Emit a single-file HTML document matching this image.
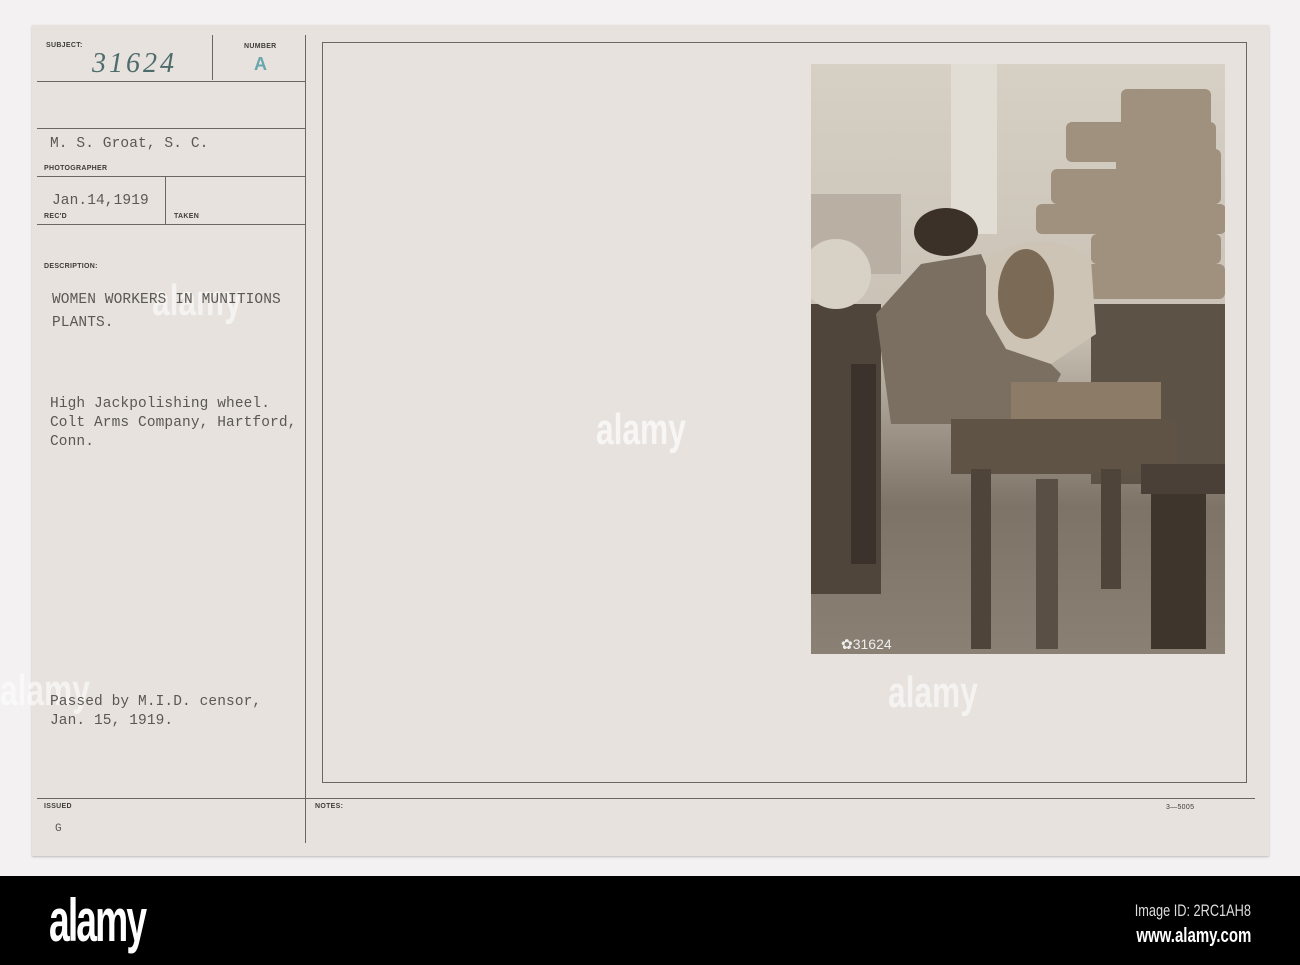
<!DOCTYPE html>
<html><head><meta charset="utf-8"><style>
*{margin:0;padding:0;box-sizing:border-box}
body{width:1300px;height:965px;background:#f3f1f1;position:relative;overflow:hidden;font-family:"Liberation Mono",monospace}
.card{position:absolute;left:32px;top:25px;width:1237px;height:831px;background:#e7e2dd;box-shadow:0 1px 2px #bbb}
.l{position:absolute;background:#6b6660}
.t{position:absolute;color:#5b5752;font-size:14.5px;line-height:19px;white-space:pre;letter-spacing:.1px}
.s{position:absolute;color:#3f3c39;font-family:"Liberation Sans",sans-serif;font-size:7px;font-weight:bold;letter-spacing:.3px}
.wm{position:absolute;color:rgba(255,255,255,.6);font-family:"Liberation Sans",sans-serif;font-weight:bold;font-size:44px;transform:scaleX(.72);transform-origin:left}
.bar{position:absolute;left:0;top:876px;width:1300px;height:89px;background:#000}
</style></head><body>
<div class="card"></div>
<div class="l" style="left:37px;top:81px;width:268px;height:1px"></div>
<div class="l" style="left:212px;top:35px;width:1px;height:45px"></div>
<div class="l" style="left:37px;top:128px;width:268px;height:1px"></div>
<div class="l" style="left:37px;top:176px;width:268px;height:1px"></div>
<div class="l" style="left:165px;top:177px;width:1px;height:47px"></div>
<div class="l" style="left:37px;top:224px;width:268px;height:1px"></div>
<div class="l" style="left:305px;top:35px;width:1px;height:808px"></div>
<div class="l" style="left:37px;top:798px;width:1218px;height:1px"></div>
<div style="position:absolute;left:322px;top:42px;width:925px;height:741px;border:1px solid #6b6660"></div>
<div class="s" style="left:46px;top:42px">SUBJECT:</div>
<div class="s" style="left:244px;top:43px">NUMBER</div>
<div style="position:absolute;left:92px;top:48px;font-family:'Liberation Serif',serif;font-style:italic;font-size:28px;color:#4d6c6c;letter-spacing:3px">31624</div>
<div style="position:absolute;left:254px;top:54px;font-family:'Liberation Sans',sans-serif;font-size:18px;color:#6aa6ad;font-weight:bold">A</div>
<div class="t" style="left:50px;top:135px">M. S. Groat, S. C.</div>
<div class="s" style="left:44px;top:165px">PHOTOGRAPHER</div>
<div class="t" style="left:52px;top:192px">Jan.14,1919</div>
<div class="s" style="left:44px;top:213px">REC'D</div>
<div class="s" style="left:174px;top:213px">TAKEN</div>
<div class="s" style="left:44px;top:263px">DESCRIPTION:</div>
<div class="wm" style="left:152px;top:276px">alamy</div>
<div class="wm" style="left:0;top:666px">alamy</div>
<div class="t" style="left:52px;top:289px;line-height:23px">WOMEN WORKERS IN MUNITIONS
PLANTS.</div>
<div class="t" style="left:50px;top:395px">High Jackpolishing wheel.
Colt Arms Company, Hartford,
Conn.</div>
<div class="t" style="left:50px;top:693px">Passed by M.I.D. censor,
Jan. 15, 1919.</div>
<div class="s" style="left:44px;top:803px">ISSUED</div>
<div class="s" style="left:315px;top:803px">NOTES:</div>
<div class="t" style="left:55px;top:820px;font-size:11px">G</div>
<div class="s" style="left:1166px;top:804px;font-weight:normal">3—5005</div>
<svg style="position:absolute;left:811px;top:64px" width="414" height="590" viewBox="0 0 414 590">
<defs><linearGradient id="bg" x1="0" y1="0" x2="0" y2="1"><stop offset="0" stop-color="#d6d0c5"/><stop offset=".45" stop-color="#c9c1b4"/><stop offset=".75" stop-color="#7d7367"/><stop offset="1" stop-color="#8a8074"/></linearGradient></defs>
<rect width="414" height="590" fill="url(#bg)"/>
<rect x="140" y="0" width="46" height="170" fill="#e2ddd4"/>
<rect x="0" y="130" width="90" height="80" fill="#b9b0a3"/>
<g fill="#a0917f">
<rect x="310" y="25" width="90" height="40" rx="6"/><rect x="255" y="58" width="150" height="40" rx="6"/>
<rect x="305" y="85" width="105" height="30" rx="6"/><rect x="240" y="105" width="170" height="35" rx="6"/>
<rect x="225" y="140" width="190" height="30" rx="6"/><rect x="280" y="170" width="130" height="30" rx="6"/>
<rect x="270" y="200" width="144" height="35" rx="6"/>
</g>
<rect x="0" y="240" width="70" height="290" fill="#4f453b"/>
<ellipse cx="25" cy="210" rx="35" ry="35" fill="#d8d1c6"/>
<rect x="280" y="240" width="134" height="180" fill="#5c5246"/>
<path d="M65 250 L110 200 L170 190 L200 260 L250 310 L230 350 L170 360 L80 360 Z" fill="#7b6f62"/>
<ellipse cx="135" cy="168" rx="32" ry="24" fill="#3c3129"/>
<path d="M175 195 Q230 160 280 195 L285 270 L240 300 L195 285 L175 250 Z" fill="#cdc4b6"/>
<ellipse cx="215" cy="230" rx="28" ry="45" fill="#7b6a55"/>
<rect x="200" y="318" width="150" height="60" fill="#8b7b67"/>
<rect x="140" y="355" width="225" height="55" fill="#5f5346"/>
<rect x="160" y="405" width="20" height="180" fill="#4e443a"/>
<rect x="290" y="405" width="20" height="120" fill="#4e443a"/>
<rect x="225" y="415" width="22" height="170" fill="#5a4f44"/>
<rect x="330" y="400" width="84" height="30" fill="#4a4037"/>
<rect x="340" y="430" width="55" height="155" fill="#3e352d"/>
<rect x="40" y="300" width="25" height="200" fill="#3a322b"/>
<text x="30" y="585" font-family="Liberation Sans,sans-serif" font-size="14" fill="#eee">✿31624</text>
</svg>
<div class="wm" style="left:596px;top:405px;color:rgba(255,255,255,.7)">alamy</div>
<div class="wm" style="left:888px;top:668px">alamy</div>
<div class="bar"></div>
<div style="position:absolute;left:49px;top:886px;color:#fff;font-family:'Liberation Sans',sans-serif;font-weight:bold;font-size:60px;letter-spacing:-3px;transform:scaleX(.62);transform-origin:left">alamy</div>
<div style="position:absolute;right:49px;top:901px;color:#ddd;font-family:'Liberation Sans',sans-serif;font-size:17px;transform:scaleX(.75);transform-origin:right">Image ID: 2RC1AH8</div>
<div style="position:absolute;right:49px;top:925px;color:#fff;font-family:'Liberation Sans',sans-serif;font-size:20px;font-weight:bold;transform:scaleX(.75);transform-origin:right">www.alamy.com</div>
</body></html>
